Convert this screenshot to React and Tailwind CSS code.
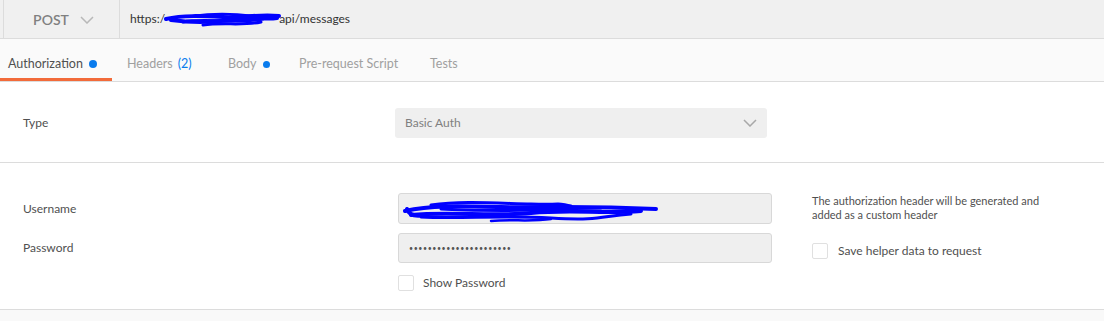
import React from "react";

const font = { fontFamily: "Lato, 'Open Sans', sans-serif" };

function Chevron({ className }) {
  return (
    <svg className={className} width="14" height="8" viewBox="0 0 14 8" fill="none">
      <path d="M1 1l6 6 6-6" stroke="currentColor" strokeWidth="1.5" />
    </svg>
  );
}

function Scribble({ width, height, children }) {
  return (
    <svg width={width} height={height} viewBox={`0 0 ${width} ${height}`} fill="none" strokeLinecap="round">
      {children}
    </svg>
  );
}

function Checkbox() {
  return <span className="inline-block w-[16px] h-[16px] rounded-[2px] border border-[#e0e0e0] bg-white" />;
}

export default function App() {
  return (
    <div className="w-[1104px] h-[321px] bg-[#f9f9f9] overflow-hidden text-[12px]" style={font}>
      {/* top bar */}
      <div className="flex h-[39px] bg-[#f0f0f0] border-b border-[#dcdcdc] pl-[3px]">
        <div className="w-[117px] flex items-center justify-center gap-[11px] border-l border-r border-[#dcdcdc] text-[#808080] text-[14px] font-semibold pl-[4px]">
          <span>POST</span>
          <Chevron className="text-[#b8b8b8] mt-[1px]" />
        </div>
        <div className="flex items-center pl-[10px] text-[#333] text-[12px]">
          <span>https:/</span>
          <span className="relative inline-block w-[114px] h-[14px]">
            <span className="absolute left-[-2px] top-[-2px]">
              <Scribble width={120} height={20}>
                <path d="M3 9 C20 5, 40 6, 60 7 S95 4, 116 6" stroke="#0000ff" strokeWidth="4" />
                <path d="M8 10 C30 13, 55 12, 75 9 S100 10, 114 8" stroke="#0000ff" strokeWidth="4" />
                <path d="M20 12 C40 8, 70 14, 100 9" stroke="#0000ff" strokeWidth="3" />
                <path d="M40 15 C60 12, 80 16, 98 12" stroke="#0000ff" strokeWidth="3" />
                <path d="M30 6 C50 3, 75 4, 90 6" stroke="#0000ff" strokeWidth="2.5" />
              </Scribble>
            </span>
          </span>
          <span>api/messages</span>
        </div>
      </div>

      {/* tabs */}
      <div className="flex h-[43px] bg-[#fafafa] border-b border-[#dcdcdc] text-[12.5px] pt-[8px]">
        <div className="relative flex items-center gap-[6px] w-[112px] pl-[8px] text-[#505050]">
          <span>Authorization</span>
          <span className="w-[8px] h-[8px] rounded-full bg-[#097bed]" />
          <span className="absolute left-0 right-0 bottom-0 h-[3px] bg-[#f26b3a]" />
        </div>
        <div className="flex items-center pl-[15px] w-[116px] text-[#a0a0a0]">
          <span>Headers</span>
          <span className="ml-[5px] text-[#097bed]">(2)</span>
        </div>
        <div className="flex items-center gap-[6px] w-[71px] text-[#a0a0a0]">
          <span>Body</span>
          <span className="w-[7px] h-[7px] rounded-full bg-[#097bed]" />
        </div>
        <div className="flex items-center w-[131px] text-[#a0a0a0]">Pre-request Script</div>
        <div className="flex items-center text-[#a0a0a0]">Tests</div>
      </div>

      {/* type */}
      <div className="flex items-center h-[81px] bg-white border-b border-[#dcdcdc] pt-[2px]">
        <div className="w-[395px] pl-[23px] text-[#505050]">Type</div>
        <div className="w-[372px] h-[30px] rounded-[3px] bg-[#efefef] flex items-center justify-between pl-[10px] pr-[10px] text-[#808080]">
          <span>Basic Auth</span>
          <Chevron className="text-[#a8a8a8]" />
        </div>
      </div>

      {/* credentials */}
      <div className="flex bg-white border-b border-[#dcdcdc] h-[147px] pt-[30px]">
        <div className="w-[398px] pl-[23px] text-[#505050] flex flex-col">
          <div className="h-[31px] flex items-center">Username</div>
          <div className="h-[30px] mt-[9px] flex items-center">Password</div>
        </div>
        <div className="w-[374px] flex flex-col">
          <div className="relative h-[31px] rounded-[3px] border border-[#d8d8d8] bg-[#efefef]">
            <span className="absolute left-[2px] top-[3px]">
              <Scribble width={260} height={26}>
                <path d="M4 14 C30 8, 60 9, 100 10 S170 8, 255 12" stroke="#0000ff" strokeWidth="4" />
                <path d="M10 18 C50 14, 90 20, 130 16 S200 17, 240 14" stroke="#0000ff" strokeWidth="4" />
                <path d="M30 8 C60 4, 90 6, 130 7 S150 5, 170 9" stroke="#0000ff" strokeWidth="3" />
                <path d="M20 20 C60 22, 100 18, 150 21 S200 19, 230 17" stroke="#0000ff" strokeWidth="3" />
                <path d="M90 24 C110 22, 130 25, 150 22" stroke="#0000ff" strokeWidth="2.5" />
                <path d="M6 12 C8 18, 14 20, 24 18" stroke="#0000ff" strokeWidth="4" />
                <path d="M40 12 C80 15, 140 12, 200 14" stroke="#0000ff" strokeWidth="3" />
              </Scribble>
            </span>
          </div>
          <div className="h-[30px] mt-[9px] rounded-[3px] border border-[#d8d8d8] bg-[#efefef] flex items-center pl-[10px] text-[#555] text-[7px] tracking-[0.6px]">
            ••••••••••••••••••••••
          </div>
          <div className="flex items-center gap-[9px] mt-[11px] text-[#505050]">
            <Checkbox />
            <span>Show Password</span>
          </div>
        </div>
        <div className="pl-[40px] pt-[1px] flex flex-col text-[#505050]">
          <div className="text-[11px] leading-[14px] w-[240px]">
            The authorization header will be generated and added as a custom header
          </div>
          <div className="flex items-center gap-[10px] mt-[20px]">
            <Checkbox />
            <span>Save helper data to request</span>
          </div>
        </div>
      </div>
    </div>
  );
}
